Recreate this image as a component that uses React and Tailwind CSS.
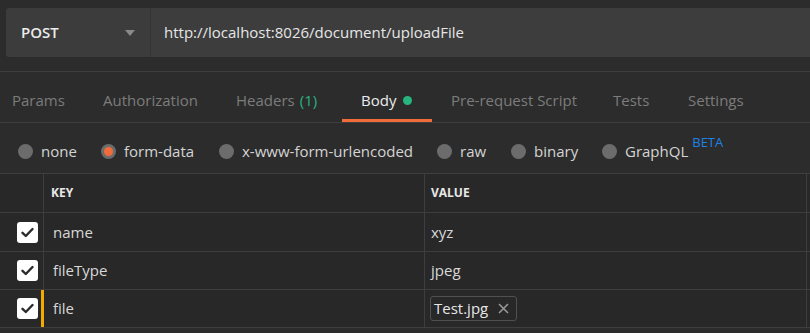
import React from "react";

const tabs = [
  { label: "Params", w: "w-[84px]", pl: "pl-[12px]" },
  { label: "Authorization", w: "w-[133px]", pl: "pl-[19px]" },
  { label: "Headers", count: "(1)", w: "w-[125px]", pl: "pl-[19px]" },
  { label: "Body", active: true, w: "w-[90px]", pl: "pl-[19px]" },
  { label: "Pre-request Script", w: "w-[162px]", pl: "pl-[19px]" },
  { label: "Tests", w: "w-[75px]", pl: "pl-[19px]" },
  { label: "Settings", w: "w-[120px]", pl: "pl-[19px]" },
];

const bodyTypes = [
  { label: "none", w: "w-[83px]" },
  { label: "form-data", w: "w-[118px]", checked: true },
  { label: "x-www-form-urlencoded", w: "w-[218px]" },
  { label: "raw", w: "w-[74px]" },
  { label: "binary", w: "w-[91px]" },
  { label: "GraphQL", w: "w-[150px]", beta: true },
];

const rows = [
  { key: "name", value: "xyz", h: "h-[39px]" },
  { key: "fileType", value: "jpeg", h: "h-[38px]" },
  { key: "file", file: "Test.jpg", marked: true, h: "h-[38px]" },
];

function Check() {
  return (
    <div className="w-[21px] h-[21px] rounded-[3px] bg-white flex items-center justify-center">
      <svg width="13" height="11" viewBox="0 0 13 11">
        <path d="M1.5 5.8 L4.8 9 L11.5 2" fill="none" stroke="#2b2b2b" strokeWidth="2.4" strokeLinecap="round" strokeLinejoin="round" />
      </svg>
    </div>
  );
}

export default function App() {
  return (
    <div
      className="w-[810px] h-[333px] overflow-hidden bg-[#2c2c2c] text-[#d6d6d6]"
      style={{ fontFamily: '"Open Sans", "Noto Sans", sans-serif' }}
    >
      {/* request bar */}
      <div className="h-[72px] border-b border-[#3e3e3e] pt-[8px] pl-[6px]">
        <div className="h-[49px] flex rounded-l-[3px] bg-[#3c3c3c] overflow-hidden">
          <div className="w-[145px] flex items-center justify-between pl-[15px] pr-[15px] border-r border-[#353535]">
            <span className="text-[15px] font-semibold text-[#ececec]">POST</span>
            <svg width="10" height="6" viewBox="0 0 10 6">
              <path d="M0 0 H10 L5 6 Z" fill="#8a8a8a" />
            </svg>
          </div>
          <div className="flex-1 flex items-center pl-[13px] bg-[#3d3d3d] text-[15px] text-[#e6e6e6]">
            http://localhost:8026/document/uploadFile
          </div>
        </div>
      </div>

      {/* tabs */}
      <div className="h-[51px] flex border-b border-[#3e3e3e]">
        {tabs.map((t) => (
          <div key={t.label} className={`${t.w} shrink-0 flex flex-col`}>
            <div className={`${t.pl} pt-[18px] flex items-center text-[15px] leading-[20px] whitespace-nowrap ${t.active ? "text-[#ececec]" : "text-[#7c7c7c]"}`}>
              {t.label}
              {t.count && <span className="ml-[5px] text-[#26b47f]">{t.count}</span>}
              {t.active && <span className="ml-[7px] w-[9px] h-[9px] rounded-full bg-[#26b47f]" />}
            </div>
            {t.active && <div className="mt-auto h-[3px] bg-[#f26b3a]" />}
          </div>
        ))}
      </div>

      {/* body types */}
      <div className="h-[51px] flex items-center pt-[6px] pl-[18px] border-b border-[#3e3e3e]">
        {bodyTypes.map((b) => (
          <div key={b.label} className={`${b.w} shrink-0 flex items-center`}>
            <span className="w-[15px] h-[15px] rounded-full bg-[#6c6c6c] flex items-center justify-center">
              {b.checked && <span className="w-[9px] h-[9px] rounded-full bg-[#f26b3a]" />}
            </span>
            <span className="ml-[8px] text-[15px] text-[#d4d4d4] whitespace-nowrap">{b.label}</span>
            {b.beta && (
              <span className="ml-[4px] relative -top-[9px] text-[13px] leading-[14px] text-[#1d82e6]">BETA</span>
            )}
          </div>
        ))}
      </div>

      {/* table */}
      <div className="bg-[#282828]">
        <div className="h-[39px] flex border-b border-[#3e3e3e]">
          <div className="w-[44px] border-r border-[#3e3e3e]" />
          <div className="w-[381px] border-r border-[#3e3e3e] flex items-center pl-[7px] text-[12px] font-bold text-[#e8e8e8]">KEY</div>
          <div className="w-[382px] border-r border-[#3e3e3e] flex items-center pl-[6px] text-[12px] font-bold text-[#e8e8e8]">VALUE</div>
        </div>
        {rows.map((r) => (
          <div key={r.key} className={`${r.h} flex border-b border-[#3e3e3e]`}>
            <div className="w-[44px] border-r border-[#3e3e3e] flex items-center pl-[17px] relative">
              <Check />
              {r.marked && <div className="absolute right-[-1px] top-0 bottom-0 w-[3px] bg-[#f2a900]" />}
            </div>
            <div className="w-[381px] border-r border-[#3e3e3e] flex items-center pl-[9px] text-[15px] text-[#d8d8d8]">{r.key}</div>
            <div className="w-[382px] border-r border-[#3e3e3e] flex items-center pl-[6px] text-[15px] text-[#d8d8d8]">
              {r.file ? (
                <span className="h-[25px] flex items-center pl-[3px] pr-[7px] border border-[#505050] rounded-[3px] -ml-[1px]">
                  <span className="text-[#e6e6e6]">{r.file}</span>
                  <svg className="ml-[10px]" width="11" height="11" viewBox="0 0 11 11">
                    <path d="M1 1 L10 10 M10 1 L1 10" stroke="#9a9a9a" strokeWidth="1.5" />
                  </svg>
                </span>
              ) : (
                r.value
              )}
            </div>
          </div>
        ))}
      </div>
    </div>
  );
}
